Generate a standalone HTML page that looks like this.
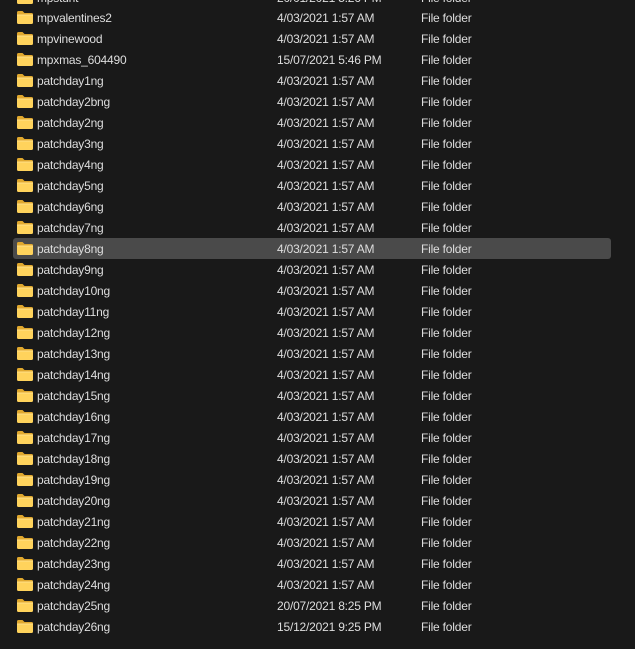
<!DOCTYPE html>
<html><head><style>
body{margin:0;width:635px;height:649px;background:#191919;overflow:hidden;font-family:"Liberation Sans",sans-serif;font-size:12px;color:#dedede}
.r{position:absolute;left:13px;width:598px;height:21px;line-height:21px}
.r.s{background:#4a4a4a;border-radius:3px}
.r span{position:absolute;top:1px;white-space:nowrap;letter-spacing:-0.2px}
.n{left:24px}.d{left:264px}.t{left:408px}
.r svg{position:absolute;left:4px;top:4px}
</style></head><body>
<svg width="0" height="0" style="position:absolute"><defs><symbol id="f" viewBox="0 0 16 13"><path d="M0 1.5Q0 0 1.5 0H5.5L7.5 2H14.5Q16 2 16 3.5V4H0Z" fill="#e0a82e"/><path d="M0 3.5H16V11.5Q16 13 14.5 13H1.5Q0 13 0 11.5Z" fill="#ffd35c"/><rect x="0" y="3.5" width="16" height="1" fill="#ffe08a"/></symbol></defs></svg>
<div class="r" style="top:-13px"><svg width="16" height="13"><use href="#f"/></svg><span class="n">mpstunt</span><span class="d">20/01/2021 5:26 PM</span><span class="t">File folder</span></div>
<div class="r" style="top:7px"><svg width="16" height="13"><use href="#f"/></svg><span class="n">mpvalentines2</span><span class="d">4/03/2021 1:57 AM</span><span class="t">File folder</span></div>
<div class="r" style="top:28px"><svg width="16" height="13"><use href="#f"/></svg><span class="n">mpvinewood</span><span class="d">4/03/2021 1:57 AM</span><span class="t">File folder</span></div>
<div class="r" style="top:49px"><svg width="16" height="13"><use href="#f"/></svg><span class="n">mpxmas_604490</span><span class="d">15/07/2021 5:46 PM</span><span class="t">File folder</span></div>
<div class="r" style="top:70px"><svg width="16" height="13"><use href="#f"/></svg><span class="n">patchday1ng</span><span class="d">4/03/2021 1:57 AM</span><span class="t">File folder</span></div>
<div class="r" style="top:91px"><svg width="16" height="13"><use href="#f"/></svg><span class="n">patchday2bng</span><span class="d">4/03/2021 1:57 AM</span><span class="t">File folder</span></div>
<div class="r" style="top:112px"><svg width="16" height="13"><use href="#f"/></svg><span class="n">patchday2ng</span><span class="d">4/03/2021 1:57 AM</span><span class="t">File folder</span></div>
<div class="r" style="top:133px"><svg width="16" height="13"><use href="#f"/></svg><span class="n">patchday3ng</span><span class="d">4/03/2021 1:57 AM</span><span class="t">File folder</span></div>
<div class="r" style="top:154px"><svg width="16" height="13"><use href="#f"/></svg><span class="n">patchday4ng</span><span class="d">4/03/2021 1:57 AM</span><span class="t">File folder</span></div>
<div class="r" style="top:175px"><svg width="16" height="13"><use href="#f"/></svg><span class="n">patchday5ng</span><span class="d">4/03/2021 1:57 AM</span><span class="t">File folder</span></div>
<div class="r" style="top:196px"><svg width="16" height="13"><use href="#f"/></svg><span class="n">patchday6ng</span><span class="d">4/03/2021 1:57 AM</span><span class="t">File folder</span></div>
<div class="r" style="top:217px"><svg width="16" height="13"><use href="#f"/></svg><span class="n">patchday7ng</span><span class="d">4/03/2021 1:57 AM</span><span class="t">File folder</span></div>
<div class="r s" style="top:238px"><svg width="16" height="13"><use href="#f"/></svg><span class="n">patchday8ng</span><span class="d">4/03/2021 1:57 AM</span><span class="t">File folder</span></div>
<div class="r" style="top:259px"><svg width="16" height="13"><use href="#f"/></svg><span class="n">patchday9ng</span><span class="d">4/03/2021 1:57 AM</span><span class="t">File folder</span></div>
<div class="r" style="top:280px"><svg width="16" height="13"><use href="#f"/></svg><span class="n">patchday10ng</span><span class="d">4/03/2021 1:57 AM</span><span class="t">File folder</span></div>
<div class="r" style="top:301px"><svg width="16" height="13"><use href="#f"/></svg><span class="n">patchday11ng</span><span class="d">4/03/2021 1:57 AM</span><span class="t">File folder</span></div>
<div class="r" style="top:322px"><svg width="16" height="13"><use href="#f"/></svg><span class="n">patchday12ng</span><span class="d">4/03/2021 1:57 AM</span><span class="t">File folder</span></div>
<div class="r" style="top:343px"><svg width="16" height="13"><use href="#f"/></svg><span class="n">patchday13ng</span><span class="d">4/03/2021 1:57 AM</span><span class="t">File folder</span></div>
<div class="r" style="top:364px"><svg width="16" height="13"><use href="#f"/></svg><span class="n">patchday14ng</span><span class="d">4/03/2021 1:57 AM</span><span class="t">File folder</span></div>
<div class="r" style="top:385px"><svg width="16" height="13"><use href="#f"/></svg><span class="n">patchday15ng</span><span class="d">4/03/2021 1:57 AM</span><span class="t">File folder</span></div>
<div class="r" style="top:406px"><svg width="16" height="13"><use href="#f"/></svg><span class="n">patchday16ng</span><span class="d">4/03/2021 1:57 AM</span><span class="t">File folder</span></div>
<div class="r" style="top:427px"><svg width="16" height="13"><use href="#f"/></svg><span class="n">patchday17ng</span><span class="d">4/03/2021 1:57 AM</span><span class="t">File folder</span></div>
<div class="r" style="top:448px"><svg width="16" height="13"><use href="#f"/></svg><span class="n">patchday18ng</span><span class="d">4/03/2021 1:57 AM</span><span class="t">File folder</span></div>
<div class="r" style="top:469px"><svg width="16" height="13"><use href="#f"/></svg><span class="n">patchday19ng</span><span class="d">4/03/2021 1:57 AM</span><span class="t">File folder</span></div>
<div class="r" style="top:490px"><svg width="16" height="13"><use href="#f"/></svg><span class="n">patchday20ng</span><span class="d">4/03/2021 1:57 AM</span><span class="t">File folder</span></div>
<div class="r" style="top:511px"><svg width="16" height="13"><use href="#f"/></svg><span class="n">patchday21ng</span><span class="d">4/03/2021 1:57 AM</span><span class="t">File folder</span></div>
<div class="r" style="top:532px"><svg width="16" height="13"><use href="#f"/></svg><span class="n">patchday22ng</span><span class="d">4/03/2021 1:57 AM</span><span class="t">File folder</span></div>
<div class="r" style="top:553px"><svg width="16" height="13"><use href="#f"/></svg><span class="n">patchday23ng</span><span class="d">4/03/2021 1:57 AM</span><span class="t">File folder</span></div>
<div class="r" style="top:574px"><svg width="16" height="13"><use href="#f"/></svg><span class="n">patchday24ng</span><span class="d">4/03/2021 1:57 AM</span><span class="t">File folder</span></div>
<div class="r" style="top:595px"><svg width="16" height="13"><use href="#f"/></svg><span class="n">patchday25ng</span><span class="d">20/07/2021 8:25 PM</span><span class="t">File folder</span></div>
<div class="r" style="top:616px"><svg width="16" height="13"><use href="#f"/></svg><span class="n">patchday26ng</span><span class="d">15/12/2021 9:25 PM</span><span class="t">File folder</span></div>
</body></html>
